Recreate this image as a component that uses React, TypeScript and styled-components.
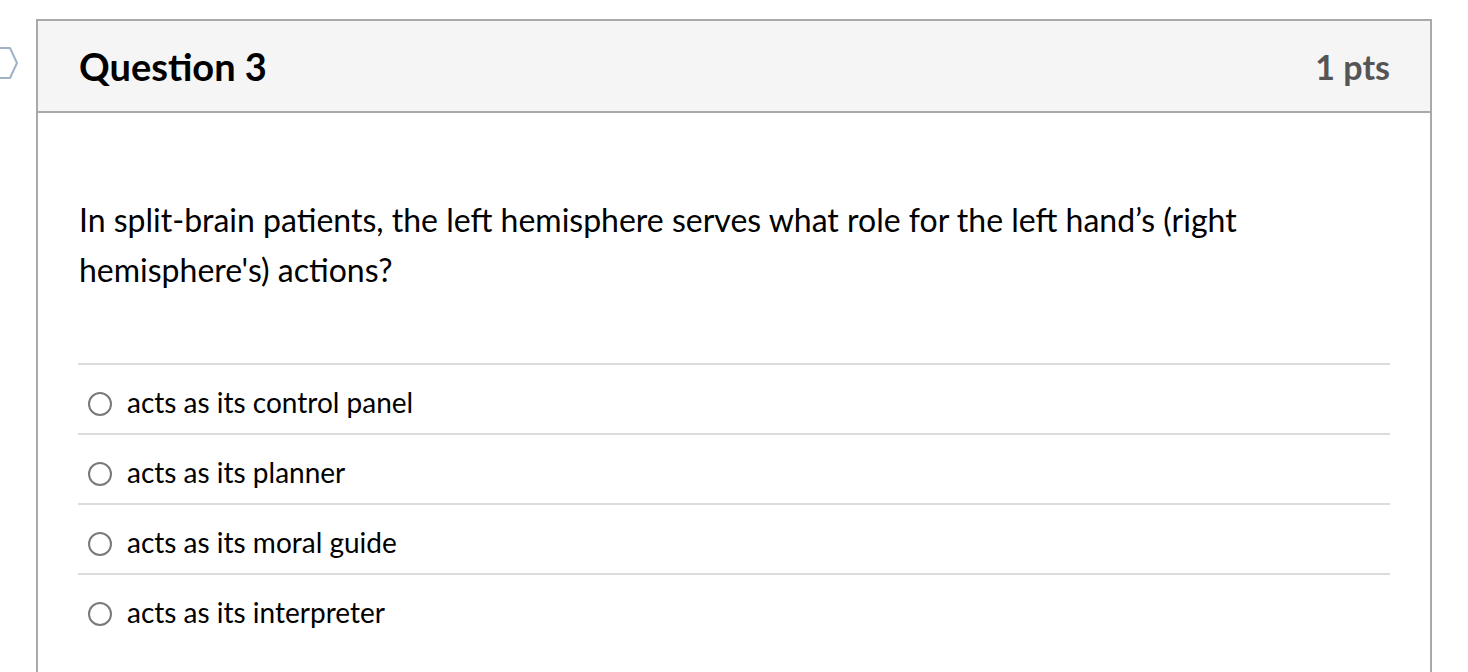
import React from "react";
import styled, { createGlobalStyle } from "styled-components";

const Global = createGlobalStyle`
  html, body { margin: 0; padding: 0; background: #fff; }
  body { font-family: Lato, "Noto Sans", "Liberation Sans", sans-serif; color: #000; }
`;

const Page = styled.div`
  display: flex;
  align-items: flex-start;
  padding-top: 19px;
  width: 1468px;
  height: 672px;
  overflow: hidden;
  box-sizing: border-box;
`;

const Gutter = styled.div`
  width: 36px;
  flex: none;
  padding-top: 27px;
  overflow: hidden;
`;

const Panel = styled.section`
  width: 1396px;
  flex: none;
  border: 2px solid #a9a9a9;
  border-bottom: none;
  box-sizing: border-box;
  min-height: 700px;
`;

const Header = styled.header`
  height: 90px;
  background: #f5f5f5;
  border-bottom: 2px solid #a9a9a9;
  display: flex;
  align-items: center;
  justify-content: space-between;
  padding: 0 40px 0 41px;
`;

const Title = styled.h2`
  margin: 0;
  font-size: 38px;
  font-weight: 700;
  color: #000;
`;

const Points = styled.span`
  font-size: 34px;
  font-weight: 700;
  color: #555;
`;

const Body = styled.div`
  padding: 82px 40px 0 40px;
`;

const QuestionText = styled.p`
  margin: 0 0 68px 1px;
  font-size: 32px;
  line-height: 50px;
`;

const AnswerList = styled.div`
  display: flex;
  flex-direction: column;
`;

const Answer = styled.label`
  display: flex;
  align-items: center;
  height: 62px;
  padding-top: 6px;
  border-top: 2px solid #dcdcdc;
  font-size: 28px;
  gap: 15px;
  padding-left: 10px;
  box-sizing: content-box;
`;

const Radio = styled.span`
  width: 20px;
  height: 20px;
  border: 2px solid #7a7a7a;
  border-radius: 50%;
  flex: none;
  margin-top: 3px;
`;

const answers = [
  "acts as its control panel",
  "acts as its planner",
  "acts as its moral guide",
  "acts as its interpreter",
];

export default function App() {
  return (
    <>
      <Global />
      <Page>
        <Gutter>
          <svg width="36" height="34" viewBox="0 0 36 34">
            <path d="M-10 2 H10 L17 17 L10 32 H-10" fill="none" stroke="#9fb2c6" strokeWidth="2" strokeLinejoin="round" />
          </svg>
        </Gutter>
        <Panel>
          <Header>
            <Title>Question 3</Title>
            <Points>1 pts</Points>
          </Header>
          <Body>
            <QuestionText>
              In split-brain patients, the left hemisphere serves what role for the left hand’s (right hemisphere's) actions?
            </QuestionText>
            <AnswerList>
              {answers.map((a) => (
                <Answer key={a}>
                  <Radio />
                  {a}
                </Answer>
              ))}
            </AnswerList>
          </Body>
        </Panel>
      </Page>
    </>
  );
}
